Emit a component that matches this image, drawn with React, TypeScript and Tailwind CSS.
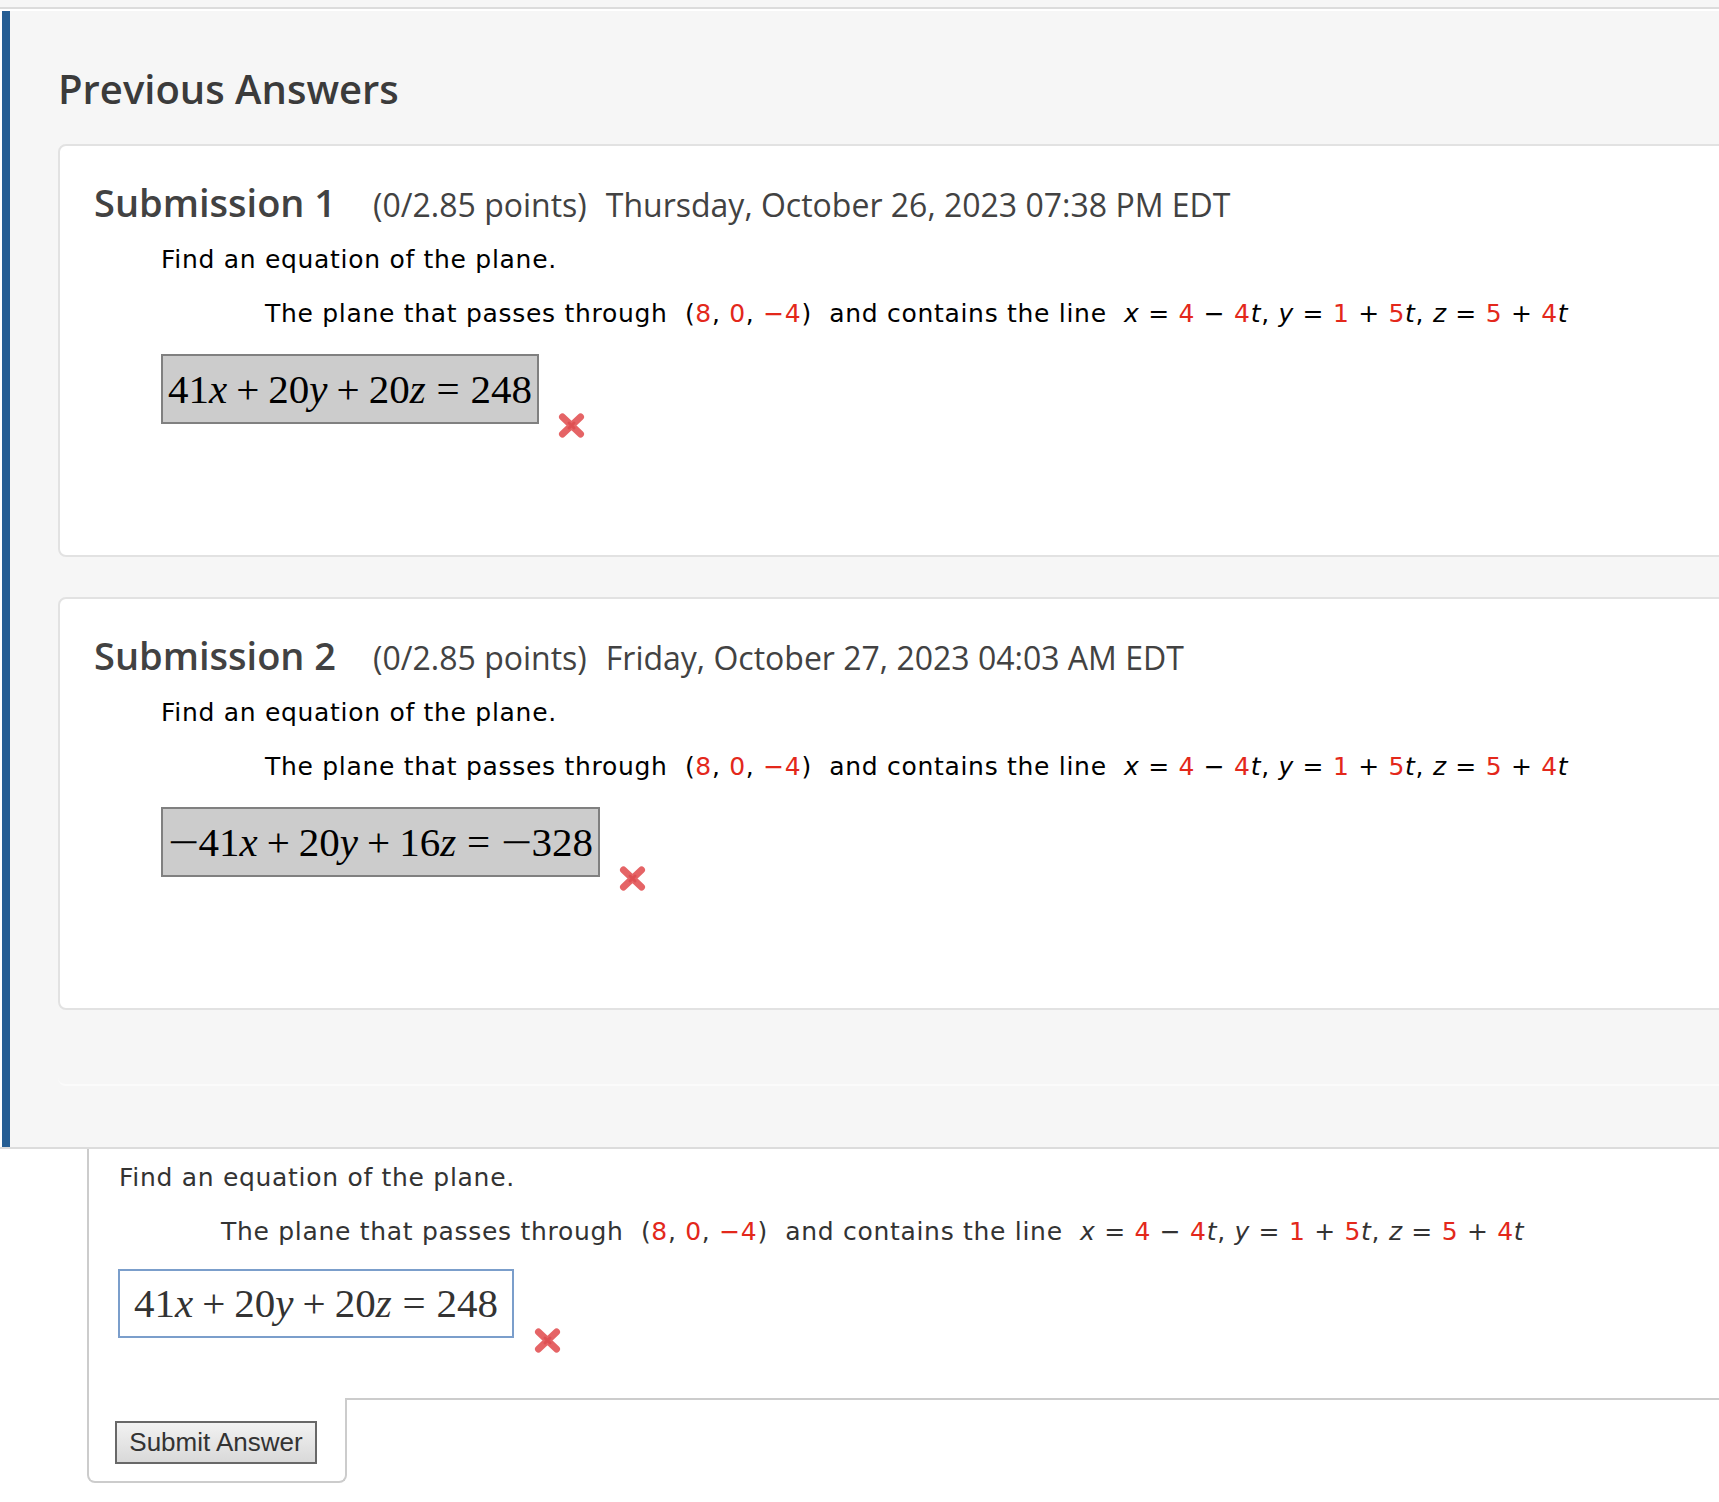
const RED = "text-[#e3281b]";

type Seg = { t: string; red?: boolean; it?: boolean };

const PROMPT: Seg[] = [
  { t: "The plane that passes through  (" },
  { t: "8", red: true },
  { t: ", " },
  { t: "0", red: true },
  { t: ", " },
  { t: "\u22124", red: true },
  { t: ")  and contains the line  " },
  { t: "x", it: true },
  { t: " = " },
  { t: "4", red: true },
  { t: " \u2212 " },
  { t: "4", red: true },
  { t: "t", it: true },
  { t: ", " },
  { t: "y", it: true },
  { t: " = " },
  { t: "1", red: true },
  { t: " + " },
  { t: "5", red: true },
  { t: "t", it: true },
  { t: ", " },
  { t: "z", it: true },
  { t: " = " },
  { t: "5", red: true },
  { t: " + " },
  { t: "4", red: true },
  { t: "t", it: true },
];

function Prompt() {
  return (
    <p className="whitespace-pre">
      {PROMPT.map((s, i) => (
        <span key={i} className={`${s.red ? RED : ""} ${s.it ? "italic" : ""}`}>
          {s.t}
        </span>
      ))}
    </p>
  );
}

// math spacing tuned to look like KaTeX's medium / thick spaces
const Op = ({ c }: { c: string }) => <span className="mx-[0.22em]">{c}</span>;
const Rel = ({ c }: { c: string }) => <span className="mx-[0.265em]">{c}</span>;
const Neg = () => <span className="inline-block origin-left scale-x-[1.35] pr-[0.18em]">{"\u2212"}</span>;
const V = ({ c }: { c: string }) => <i className="italic">{c}</i>;

function Eq1() {
  return (
    <span className="whitespace-nowrap">
      41<V c="x" />
      <Op c="+" />
      20<V c="y" />
      <Op c="+" />
      20<V c="z" />
      <Rel c="=" />
      248
    </span>
  );
}

function Eq2() {
  return (
    <span className="whitespace-nowrap">
      <Neg />
      41<V c="x" />
      <Op c="+" />
      20<V c="y" />
      <Op c="+" />
      16<V c="z" />
      <Rel c="=" />
      <Neg />
      328
    </span>
  );
}

function XMark() {
  return (
    <svg width="27" height="25" viewBox="0 0 27 25" className="shrink-0">
      <path
        d="M4.5 4 L22.5 21 M22.5 4 L4.5 21"
        stroke="#e56466"
        strokeWidth="7"
        strokeLinecap="round"
      />
      <path d="M11 10 L16 15 M16 10 L11 15" stroke="#de5053" strokeWidth="3" strokeLinecap="round" />
    </svg>
  );
}

function Submission({
  n,
  date,
  eq,
}: {
  n: number;
  date: string;
  eq: React.ReactNode;
}) {
  return (
    <div className="-mr-[20px] h-[413px] rounded-[8px] border-2 border-[#e2e2e2] bg-white pl-[34px] pt-[30px]">
      <div className="flex items-baseline text-[#424242]">
        <span className="text-[38px] font-semibold leading-[52px]">Submission {n}</span>
        <span className="ml-[37px] text-[32px] leading-[40px]">(0/2.85 points)</span>
        <span className="ml-[19px] text-[32px] leading-[40px]">{date}</span>
      </div>
      <div className="pl-[67px] font-['DejaVu_Sans',sans-serif] text-[25px] leading-[32px] tracking-[0.7px] text-black">
        <p className="mt-[16px]">Find an equation of the plane.</p>
        <div className="mt-[22px] pl-[104px]">
          <Prompt />
        </div>
        <div className="mt-[24px] flex items-start">
          <div className="flex h-[70px] items-center border-2 border-[#808080] bg-[#cccccc] px-[5px] font-['Liberation_Serif',serif] text-[41px] leading-none tracking-normal">
            {eq}
          </div>
          <div className="ml-[19px] mt-[59px]">
            <XMark />
          </div>
        </div>
      </div>
    </div>
  );
}

export default function App() {
  return (
    <div className="relative h-[1502px] w-[1719px] overflow-hidden bg-white font-['Open_Sans',sans-serif]">
      <div className="h-[7px] bg-[#f6f6f6]" />
      <div className="h-[2px] bg-[#dcdcdc]" />
      <div className="h-[2px] bg-white" />

      <div className="flex h-[1138px] border-b-2 border-[#dcdcdc] bg-[#f6f6f6]">
        <div className="w-[2px] bg-white" />
        <div className="w-[8px] bg-[#265e94]" />
        <div className="min-w-0 flex-1 pl-[48px] pt-[51px]">
          <h2 className="text-[40px] font-semibold leading-[54px] text-[#3b3b3b]">Previous Answers</h2>
          <div className="mt-[28px] flex flex-col gap-[40px]">
            <Submission n={1} date="Thursday, October 26, 2023 07:38 PM EDT" eq={<Eq1 />} />
            <Submission n={2} date="Friday, October 27, 2023 04:03 AM EDT" eq={<Eq2 />} />
          </div>
          <div className="-mr-[20px] h-[76px] rounded-b-[8px] border-b-2 border-[#fbfbfb]" />
        </div>
      </div>

      <div className="ml-[87px]">
        <div className="h-[249px] border-l-2 border-[#cccccc] pl-[30px] pt-[13px] font-['DejaVu_Sans',sans-serif] text-[25px] leading-[32px] tracking-[0.7px] text-[#333333]">
          <p>Find an equation of the plane.</p>
          <div className="mt-[22px] pl-[102px]">
            <Prompt />
          </div>
          <div className="-ml-px mt-[21px] flex items-start">
            <div className="flex h-[69px] items-center border-2 border-[#7b9ecb] bg-white px-[14px] font-['Liberation_Serif',serif] text-[41px] leading-none tracking-normal text-[#333333]">
              <Eq1 />
            </div>
            <div className="ml-[20px] mt-[59px]">
              <XMark />
            </div>
          </div>
        </div>
        <div className="flex h-[85px]">
          <div className="h-[85px] w-[260px] rounded-b-[8px] border-2 border-t-0 border-[#cccccc] pl-[26px] pt-[23px]">
            <button className="flex h-[43px] w-[202px] items-center justify-center border-2 border-[#686868] bg-linear-to-b from-[#f2f2f2] to-[#d9d9d9] font-['Liberation_Sans',sans-serif] text-[26px] text-[#333333]">
              Submit Answer
            </button>
          </div>
          <div className="flex-1 border-t-2 border-[#cccccc]" />
        </div>
      </div>
    </div>
  );
}
